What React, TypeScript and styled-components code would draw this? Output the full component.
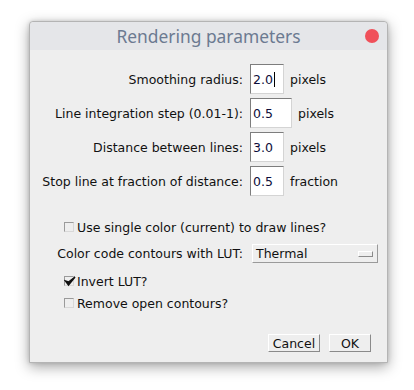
import styled, { createGlobalStyle } from "styled-components";

const Global = createGlobalStyle`
  html, body {
    margin: 0;
    padding: 0;
    background: #ffffff;
  }
  body {
    width: 414px;
    height: 390px;
    overflow: hidden;
  }
`;

const Page = styled.div`
  width: 414px;
  height: 390px;
  padding: 21px 0 0 29px;
  box-sizing: border-box;
`;

const Window = styled.div`
  width: 359px;
  height: 342px;
  box-sizing: border-box;
  display: flex;
  flex-direction: column;
  background: #eeeeee;
  border: 1px solid #b4b4b4;
  border-radius: 4px 4px 0 0;
  box-shadow: 0 4px 14px rgba(0, 0, 0, 0.35), 0 0 4px rgba(0, 0, 0, 0.15);
  font-family: "DejaVu Sans", sans-serif;
  font-size: 12.5px;
  color: #111;
`;

const TitleBar = styled.div`
  height: 28px;
  flex: none;
  display: flex;
  align-items: center;
  justify-content: center;
  position: relative;
  background: #e5e6e9;
  border-radius: 4px 4px 0 0;
`;

const Title = styled.span`
  font-family: "Noto Sans", sans-serif;
  font-size: 17.4px;
  color: #6c7a91;
`;

const CloseDot = styled.span`
  position: absolute;
  right: 8px;
  top: 7px;
  width: 14px;
  height: 14px;
  border-radius: 50%;
  background: #f0505a;
`;

const Body = styled.div`
  flex: 1;
  display: flex;
  flex-direction: column;
  padding: 14px 16px 10px 12px;
`;

const Fields = styled.div`
  display: grid;
  grid-template-columns: 201px auto;
  column-gap: 7px;
  row-gap: 4px;
  align-items: center;
`;

const Label = styled.span`
  text-align: right;
  white-space: nowrap;
`;

const FieldCell = styled.div`
  display: flex;
  align-items: center;
  gap: 6px;
`;

const TextField = styled.div<{ $w: number }>`
  width: ${(p) => p.$w}px;
  height: 30px;
  box-sizing: border-box;
  background: #ffffff;
  border-top: 1px solid #7d7d7d;
  border-left: 1px solid #7d7d7d;
  border-right: 1px solid #d4d4d4;
  border-bottom: 1px solid #d4d4d4;
  display: flex;
  align-items: center;
  padding-left: 2px;
  color: #0d0d3a;
`;

const Caret = styled.span`
  display: inline-block;
  width: 1px;
  height: 15px;
  background: #000;
  margin-left: 1px;
`;

const CheckRow = styled.label<{ $top: number }>`
  display: flex;
  align-items: center;
  gap: 3px;
  margin-top: ${(p) => p.$top}px;
  margin-left: 22px;
  height: 16px;
  white-space: nowrap;
`;

const Box = styled.span`
  width: 10px;
  height: 10px;
  box-sizing: border-box;
  border-top: 1px solid #9a9a9a;
  border-left: 1px solid #9a9a9a;
  border-right: 1px solid #d8d8d8;
  border-bottom: 1px solid #d8d8d8;
  position: relative;
  display: inline-block;
`;

const Tick = styled.svg`
  position: absolute;
  left: -1px;
  top: -2px;
`;

const ChoiceRow = styled.div`
  display: grid;
  grid-template-columns: 201px auto;
  column-gap: 9px;
  align-items: center;
  margin-top: 9px;
  margin-bottom: 10px;
`;

const Choice = styled.div`
  width: 126px;
  height: 19px;
  box-sizing: border-box;
  border-top: 1px solid #ffffff;
  border-left: 1px solid #ffffff;
  border-right: 1px solid #9a9a9a;
  border-bottom: 1px solid #9a9a9a;
  background: #eeeeee;
  display: flex;
  align-items: center;
  justify-content: space-between;
  padding: 0 4px 0 3px;
`;

const ChoiceKnob = styled.span`
  width: 13px;
  height: 4px;
  border-top: 1px solid #ffffff;
  border-left: 1px solid #ffffff;
  border-right: 1px solid #8a8a8a;
  border-bottom: 1px solid #8a8a8a;
`;

const Buttons = styled.div`
  margin-top: auto;
  display: flex;
  justify-content: flex-end;
  gap: 9px;
`;

const Button = styled.button<{ $w: number }>`
  width: ${(p) => p.$w}px;
  height: 18px;
  padding: 0;
  box-sizing: border-box;
  background: #eeeeee;
  border-top: 1px solid #ffffff;
  border-left: 1px solid #ffffff;
  border-right: 1px solid #8a8a8a;
  border-bottom: 1px solid #8a8a8a;
  font-family: "DejaVu Sans", sans-serif;
  font-size: 12.5px;
  color: #111;
`;

const params = [
  { label: "Smoothing radius:", value: "2.0", w: 34, unit: "pixels", caret: true },
  { label: "Line integration step (0.01-1):", value: "0.5", w: 42, unit: "pixels" },
  { label: "Distance between lines:", value: "3.0", w: 34, unit: "pixels" },
  { label: "Stop line at fraction of distance:", value: "0.5", w: 34, unit: "fraction" },
];

function Check({ checked }: { checked?: boolean }) {
  return (
    <Box>
      {checked ? (
        <Tick width="12" height="12" viewBox="0 0 12 12">
          <path d="M1.5 6 L4.5 10 L11 2 L4.5 7 Z" fill="#111" stroke="#111" strokeWidth="1.4" />
        </Tick>
      ) : null}
    </Box>
  );
}

function App() {
  return (
    <>
      <Global />
      <Page>
        <Window>
          <TitleBar>
            <Title>Rendering parameters</Title>
            <CloseDot />
          </TitleBar>
          <Body>
            <Fields>
              {params.map((p) => (
                <>
                  <Label key={p.label}>{p.label}</Label>
                  <FieldCell key={p.label + "f"}>
                    <TextField $w={p.w}>
                      {p.value}
                      {p.caret ? <Caret /> : null}
                    </TextField>
                    <span>{p.unit}</span>
                  </FieldCell>
                </>
              ))}
            </Fields>
            <CheckRow $top={23}>
              <Check />
              Use single color (current) to draw lines?
            </CheckRow>
            <ChoiceRow>
              <Label>Color code contours with LUT:</Label>
              <Choice>
                <span>Thermal</span>
                <ChoiceKnob />
              </Choice>
            </ChoiceRow>
            <CheckRow $top={0}>
              <Check checked />
              Invert LUT?
            </CheckRow>
            <CheckRow $top={6}>
              <Check />
              Remove open contours?
            </CheckRow>
            <Buttons>
              <Button $w={52}>Cancel</Button>
              <Button $w={42}>OK</Button>
            </Buttons>
          </Body>
        </Window>
      </Page>
    </>
  );
}

export default App;
